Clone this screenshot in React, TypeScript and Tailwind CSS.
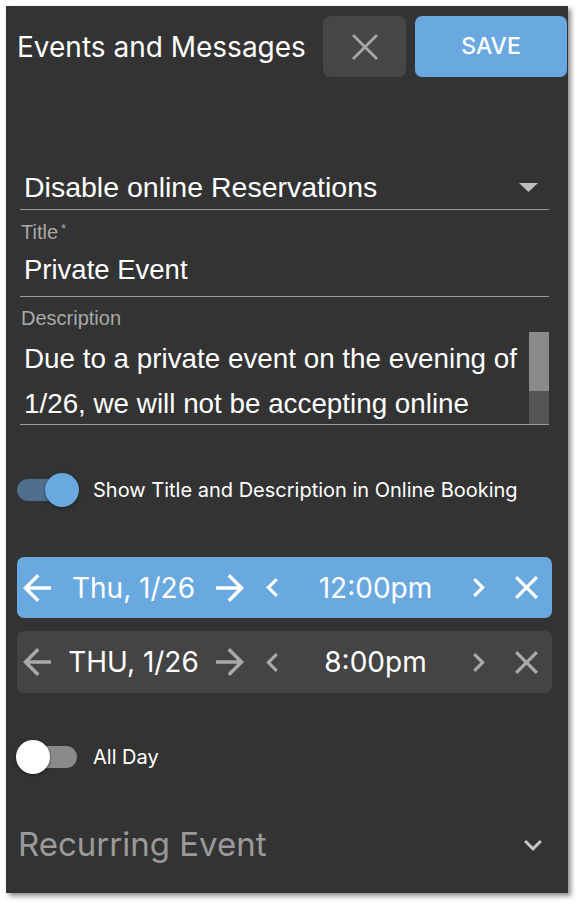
import React from "react";

const ArrowLeft = ({ className }: { className?: string }) => (
  <svg viewBox="4 4 16 16" className={className} fill="currentColor">
    <path d="M20 11H7.83l5.59-5.59L12 4l-8 8 8 8 1.41-1.41L7.83 13H20v-2z" />
  </svg>
);

const ArrowRight = ({ className }: { className?: string }) => (
  <svg viewBox="4 4 16 16" className={className} fill="currentColor">
    <path d="M12 4l-1.41 1.41L16.17 11H4v2h12.17l-5.58 5.59L12 20l8-8z" />
  </svg>
);

const ChevLeft = ({ className }: { className?: string }) => (
  <svg viewBox="8 6 7.41 12" className={className} fill="currentColor">
    <path d="M15.41 7.41L14 6l-6 6 6 6 1.41-1.41L10.83 12z" />
  </svg>
);

const ChevRight = ({ className }: { className?: string }) => (
  <svg viewBox="8.59 6 7.41 12" className={className} fill="currentColor">
    <path d="M10 6L8.59 7.41 13.17 12l-4.58 4.59L10 18l6-6z" />
  </svg>
);

const Close = ({ className }: { className?: string }) => (
  <svg viewBox="5 5 14 14" className={className} fill="currentColor">
    <path d="M19 6.41L17.59 5 12 10.59 6.41 5 5 6.41 10.59 12 5 17.59 6.41 19 12 13.41 17.59 19 19 17.59 13.41 12z" />
  </svg>
);

const ExpandMore = ({ className }: { className?: string }) => (
  <svg viewBox="6 8.59 12 7.41" className={className} fill="currentColor">
    <path d="M16.59 8.59L12 13.17 7.41 8.59 6 10l6 6 6-6z" />
  </svg>
);

const Toggle = ({ on, label }: { on: boolean; label: string }) => (
  <div className="flex items-center h-[36px] ml-[11px]">
    <div className="relative w-[60px] h-[36px] flex items-center">
      <div className={`w-[60px] h-[22px] rounded-full ${on ? "bg-[#4f6f8d]" : "bg-[#8a8a8a]"}`} />
      <div
        className={`absolute top-[1px] w-[34px] h-[34px] rounded-full shadow-[0_1px_3px_rgba(0,0,0,0.5)] ${
          on ? "left-[28px] bg-[#69a9e0]" : "left-[-1px] bg-white"
        }`}
      />
    </div>
    <span className="ml-[16px] text-[20px] text-white font-['Inter',sans-serif]">{label}</span>
  </div>
);

const DateRow = ({ date, time, active }: { date: string; time: string; active: boolean }) => {
  const icon = active ? "text-white" : "text-[#a9a9a9]";
  return (
    <div
      className={`ml-[11px] w-[535px] flex items-center rounded-[7px] pl-[6px] pr-[14px] font-['Inter',sans-serif] text-white text-[28px] ${
        active ? "bg-[#69a9e0] h-[61px]" : "bg-[#444444] h-[62px]"
      }`}
    >
      <ArrowLeft className={`w-[28px] h-[28px] ${icon}`} />
      <div className="w-[165px] text-center">{date}</div>
      <ArrowRight className={`w-[28px] h-[28px] ${icon}`} />
      <ChevLeft className={`ml-[22px] w-[12px] h-[19px] ${icon}`} />
      <div className="w-[195px] text-center">{time}</div>
      <ChevRight className={`w-[12px] h-[19px] ${icon}`} />
      <Close className={`ml-[30px] w-[23px] h-[23px] ${icon}`} />
    </div>
  );
};

export default function App() {
  return (
    <div className="min-h-screen bg-white pt-[6px] pl-[6px]">
      <div className="w-[562px] h-[887px] bg-[#333333] shadow-[3px_3px_5px_rgba(0,0,0,0.45)] flex flex-col">
        {/* header */}
        <div className="mt-[10px] h-[61px] flex items-center">
          <h1 className="flex-1 pl-[11px] text-[28px] text-white font-['Inter',sans-serif]">Events and Messages</h1>
          <button className="w-[83px] h-[61px] rounded-[7px] bg-[#464646] flex items-center justify-center">
            <svg width="26" height="26" viewBox="0 0 26 26" stroke="#a8a8a8" strokeWidth="2.6">
              <line x1="1" y1="1" x2="25" y2="25" />
              <line x1="25" y1="1" x2="1" y2="25" />
            </svg>
          </button>
          <button className="ml-[9px] mr-[1px] w-[152px] h-[61px] rounded-[7px] bg-[#69a9e0] text-white text-[23px] font-medium font-['Inter',sans-serif]">
            SAVE
          </button>
        </div>

        {/* fields */}
        <div className="ml-[14px] w-[529px] font-['Liberation_Sans',Arial,sans-serif] text-white">
          <div className="mt-[89px] h-[44px] border-b border-[#9b9b9b] flex items-center justify-between pl-[4px] pr-[11px]">
            <span className="text-[28.5px]">Disable online Reservations</span>
            <svg width="19" height="9" viewBox="0 0 19 9">
              <polygon points="0,0 19,0 9.5,9" fill="#bdbdbd" />
            </svg>
          </div>

          <div className="mt-[11px] pl-[1px] h-[22px] leading-[22px] text-[20px] text-[#a9a9a9]">
            Title<sup className="text-[13px] ml-[3px]">*</sup>
          </div>
          <div className="h-[54px] border-b border-[#9b9b9b] flex items-center pl-[4px] text-[27.5px]">Private Event</div>

          <div className="mt-[10px] pl-[1px] h-[22px] leading-[22px] text-[20px] text-[#a9a9a9]">Description</div>
          <div className="mt-[3px] h-[93px] border-b border-[#9b9b9b] flex">
            <div className="flex-1 overflow-hidden pt-[4px] pl-[4px] text-[27.8px] leading-[45px] whitespace-nowrap">
              <div>Due to a private event on the evening of</div>
              <div>1/26, we will not be accepting online</div>
            </div>
            <div className="w-[20px] flex flex-col">
              <div className="h-[59px] bg-[#8a8a8a]" />
              <div className="flex-1 bg-[#555555]" />
            </div>
          </div>
        </div>

        <div className="mt-[47px]">
          <Toggle on label="Show Title and Description in Online Booking" />
        </div>

        <div className="mt-[49px]">
          <DateRow active date="Thu, 1/26" time="12:00pm" />
        </div>
        <div className="mt-[13px]">
          <DateRow active={false} date="THU, 1/26" time="8:00pm" />
        </div>

        <div className="mt-[46px]">
          <Toggle on={false} label="All Day" />
        </div>

        <div className="mt-[45px] ml-[12px] w-[524px] h-[50px] flex items-center justify-between">
          <span className="text-[33px] text-[#9a9a9a] font-['Inter',sans-serif]">Recurring Event</span>
          <ExpandMore className="w-[18px] h-[11px] text-[#c8c8c8]" />
        </div>
      </div>
    </div>
  );
}
